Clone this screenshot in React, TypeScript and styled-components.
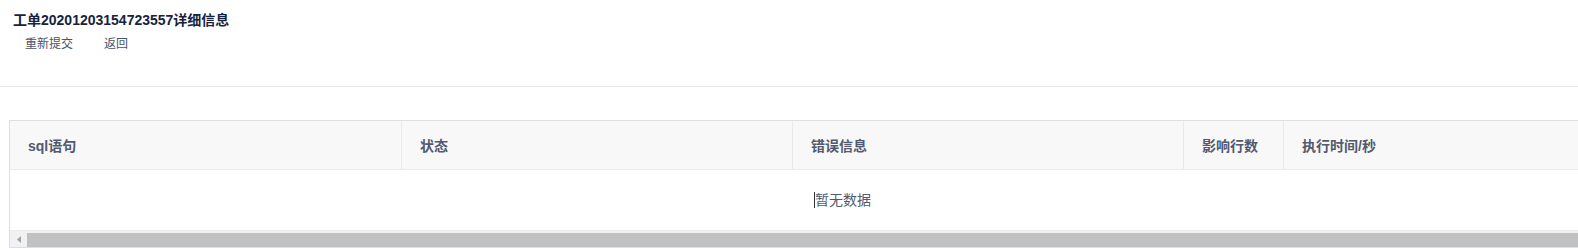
import React from "react";
import styled, { createGlobalStyle } from "styled-components";

const GlobalStyle = createGlobalStyle`
	html, body {
		margin: 0;
		padding: 0;
		background: #fff;
		overflow: hidden;
	}
	body {
		font-family: "Liberation Sans", "Noto Sans CJK SC", sans-serif;
		color: #515a6e;
	}
`;

const Page = styled.div`
	width: 1700px;
`;

const TopBar = styled.div`
	height: 87px;
	padding: 10px 0 0 13px;
	box-sizing: border-box;
	border-bottom: 1px solid #e8eaec;
`;

const Title = styled.h3`
	margin: 0;
	font-size: 14px;
	line-height: 20px;
	font-weight: bold;
	color: #17233d;
`;

const Actions = styled.div`
	display: flex;
	margin-top: 2px;
	padding-left: 5px;
`;

const TextButton = styled.button`
	height: 24px;
	padding: 0 7px;
	margin-right: 17px;
	border: none;
	background: transparent;
	font-family: inherit;
	font-size: 12px;
	line-height: 24px;
	color: #4a5366;
	cursor: pointer;
`;

const columns = "392px 391px 391px 100px 391px";

const Table = styled.div`
	margin: 33px 0 0 9px;
	width: 1666px;
	border: 1px solid #dcdee2;
	border-right: none;
	box-sizing: border-box;
`;

const HeadRow = styled.div`
	display: grid;
	grid-template-columns: ${columns};
	height: 48px;
	background: #f8f8f9;
	border-bottom: 1px solid #e8eaec;
`;

const HeadCell = styled.div<{ $last?: boolean }>`
	display: flex;
	align-items: center;
	padding-left: 18px;
	font-size: 14px;
	font-weight: bold;
	color: #515a6e;
	border-right: ${(p) => (p.$last ? "none" : "1px solid #e8eaec")};
`;

const EmptyRow = styled.div`
	height: 61px;
	box-sizing: border-box;
	display: flex;
	align-items: center;
	justify-content: center;
	font-size: 14px;
	line-height: 20px;
	color: #515a6e;
	border-bottom: 1px solid #e8eaec;
`;

const Caret = styled.span`
	display: inline-block;
	width: 1px;
	height: 16px;
	background: #333;
`;

const Scrollbar = styled.div`
	display: flex;
	height: 16px;
	background: #f1f1f1;
`;

const ArrowButton = styled.div`
	width: 17px;
	display: flex;
	align-items: center;
	justify-content: center;
`;

const Thumb = styled.div`
	flex: 1;
	margin: 2px 0 0;
	background: #c1c1c1;
`;

const heads = ["sql语句", "状态", "错误信息", "影响行数", "执行时间/秒"];

export default function App() {
	return (
		<Page>
			<GlobalStyle />
			<TopBar>
				<Title>工单20201203154723557详细信息</Title>
				<Actions>
					<TextButton>重新提交</TextButton>
					<TextButton>返回</TextButton>
				</Actions>
			</TopBar>
			<Table>
				<HeadRow>
					{heads.map((h, i) => (
						<HeadCell key={h} $last={i === heads.length - 1}>
							{h}
						</HeadCell>
					))}
				</HeadRow>
				<EmptyRow>
					<Caret />
					暂无数据
				</EmptyRow>
				<Scrollbar>
					<ArrowButton>
						<svg width="4" height="7" viewBox="0 0 4 7">
							<path d="M4 0 L0 3.5 L4 7 Z" fill="#a3a3a3" />
						</svg>
					</ArrowButton>
					<Thumb />
				</Scrollbar>
			</Table>
		</Page>
	);
}
